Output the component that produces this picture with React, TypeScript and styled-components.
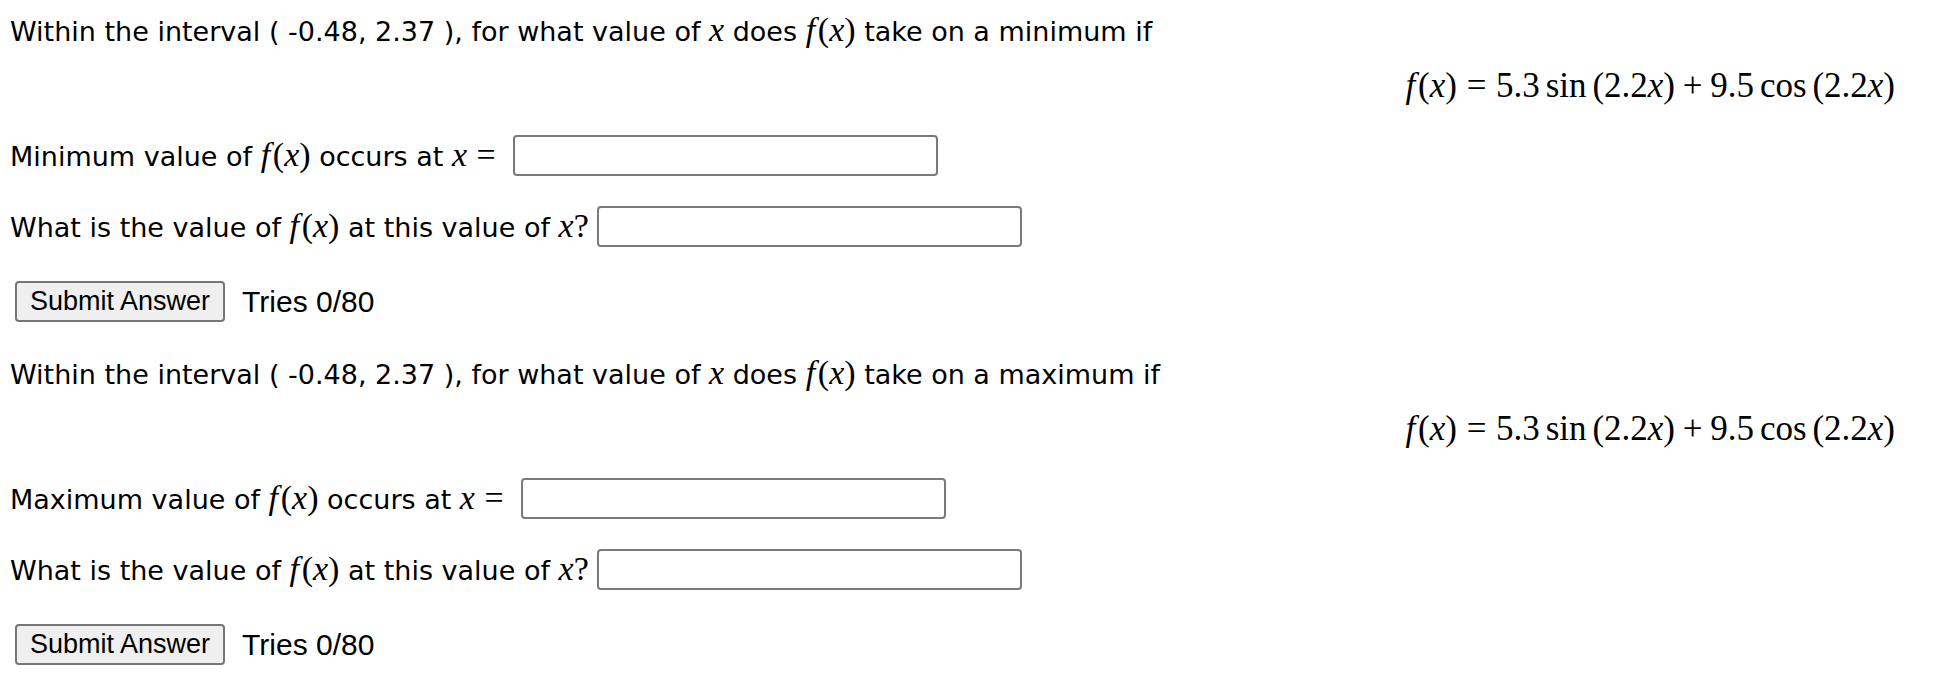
import React from "react";
import styled, { createGlobalStyle } from "styled-components";

const GlobalStyle = createGlobalStyle`
  html, body {
    margin: 0;
    padding: 0;
    background: #ffffff;
  }
  body {
    font-family: "DejaVu Sans", Verdana, sans-serif;
    font-size: 27px;
    color: #000000;
  }
`;

const Page = styled.main`
  display: flex;
  flex-direction: column;
  gap: 33px;
  padding: 12px 0 0 10px;
`;

const Problem = styled.section`
  display: flex;
  flex-direction: column;
`;

const Prompt = styled.p`
  margin: 0;
  height: 36px;
  line-height: 36px;
  white-space: nowrap;
`;

const FormulaRow = styled.div`
  display: flex;
  justify-content: flex-end;
  align-items: center;
  height: 48px;
  margin-top: 14px;
  padding-right: 63px;
`;

const AnswerRow = styled.div<{ $top: number }>`
  display: flex;
  align-items: center;
  gap: 8px;
  margin-top: ${(p) => p.$top}px;
  height: 41px;
`;

const Label = styled.span`
  white-space: pre;
  line-height: 36px;
`;

const AnswerInput = styled.input`
  box-sizing: border-box;
  width: 425px;
  height: 41px;
  border: 2px solid #7a7a7a;
  border-radius: 4px;
  background: #ffffff;
  padding: 0 6px;
  font-size: 24px;
`;

const SubmitRow = styled.div`
  display: flex;
  align-items: center;
  gap: 17px;
  margin-top: 34px;
  padding-left: 5px;
`;

const SubmitButton = styled.button`
  box-sizing: border-box;
  height: 41px;
  padding: 0 13px;
  font-family: "Liberation Sans", Arial, sans-serif;
  font-size: 27px;
  color: #000000;
  background: #efefef;
  border: 2px solid #767676;
  border-radius: 4px;
`;

const Tries = styled.span`
  font-family: "Liberation Sans", Arial, sans-serif;
  font-size: 30px;
`;

const MathInline = styled.span`
  font-family: "Liberation Serif", "Times New Roman", serif;
  font-size: 34px;
  white-space: nowrap;
`;

const MathDisplay = styled.span`
  font-family: "Liberation Serif", "Times New Roman", serif;
  font-size: 35px;
  white-space: nowrap;
`;

const V = styled.i`
  font-style: italic;
`;

const FVar = styled.i`
  font-style: italic;
  margin-right: 0.08em;
`;

const Op = styled.span<{ $space: number }>`
  margin: 0 ${(p) => p.$space}em;
`;

const Fn = styled.span`
  margin-right: 0.167em;
`;

const Coef = styled.span`
  margin-right: 0.167em;
`;

const Fx = () => (
  <>
    <FVar>f</FVar>(<V>x</V>)
  </>
);

const Formula = () => (
  <MathDisplay>
    <Fx />
    <Op $space={0.278}>=</Op>
    <Coef>5.3</Coef>
    <Fn>sin</Fn>
    (2.2<V>x</V>)
    <Op $space={0.222}>+</Op>
    <Coef>9.5</Coef>
    <Fn>cos</Fn>
    (2.2<V>x</V>)
  </MathDisplay>
);

const ProblemBlock = ({ kind }: { kind: "minimum" | "maximum" }) => {
  const Cap = kind === "minimum" ? "Minimum" : "Maximum";
  return (
    <Problem>
      <Prompt>
        {"Within the interval ( -0.48, 2.37 ), for what value of "}
        <MathInline>
          <V>x</V>
        </MathInline>
        {" does "}
        <MathInline>
          <Fx />
        </MathInline>
        {` take on a ${kind} if`}
      </Prompt>
      <FormulaRow>
        <Formula />
      </FormulaRow>
      <AnswerRow $top={25}>
        <Label>
          {`${Cap} value of `}
          <MathInline>
            <Fx />
          </MathInline>
          {" occurs at "}
          <MathInline>
            <V>x</V>
            <Op $space={0.278}>=</Op>
          </MathInline>
        </Label>
        <AnswerInput type="text" aria-label={`${Cap} x`} />
      </AnswerRow>
      <AnswerRow $top={30}>
        <Label>
          {"What is the value of "}
          <MathInline>
            <Fx />
          </MathInline>
          {" at this value of "}
          <MathInline>
            <V>x</V>?
          </MathInline>
        </Label>
        <AnswerInput type="text" aria-label={`${Cap} value`} />
      </AnswerRow>
      <SubmitRow>
        <SubmitButton type="button">Submit Answer</SubmitButton>
        <Tries>Tries 0/80</Tries>
      </SubmitRow>
    </Problem>
  );
};

export default function App() {
  return (
    <>
      <GlobalStyle />
      <Page>
        <ProblemBlock kind="minimum" />
        <ProblemBlock kind="maximum" />
      </Page>
    </>
  );
}
